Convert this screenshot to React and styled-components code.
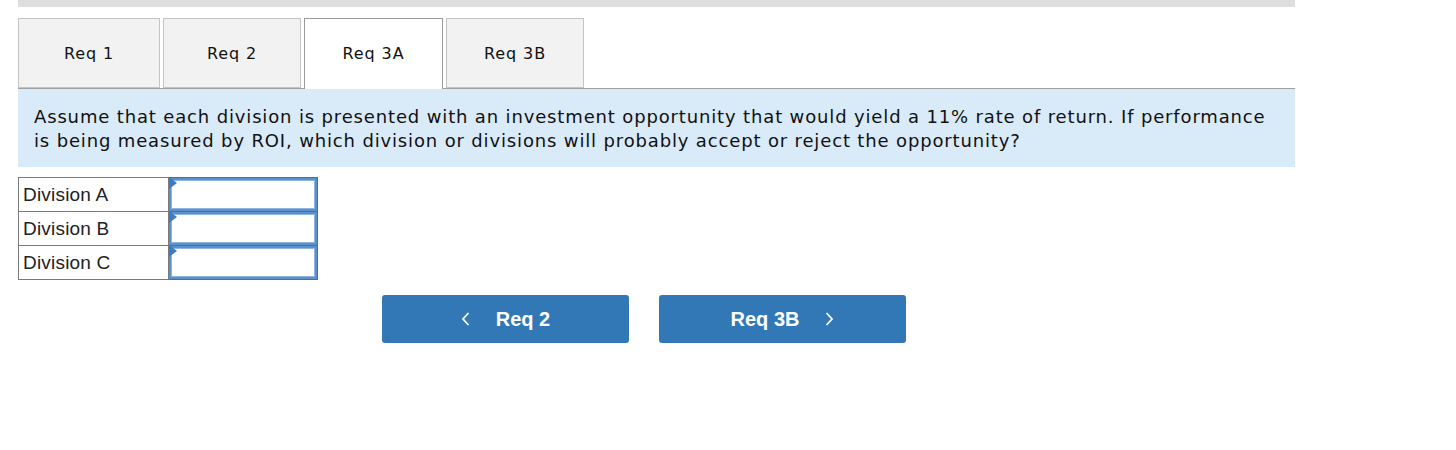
import React from "react";
import styled, { createGlobalStyle } from "styled-components";

const Global = createGlobalStyle`
  html, body { margin: 0; padding: 0; background: #fff; }
  body { font-family: "Liberation Sans", Arial, sans-serif; }
`;

const Page = styled.div`
  width: 1277px;
  margin-left: 18px;
`;

const TopBar = styled.div`
  height: 7px;
  background: #dedede;
`;

const Tabs = styled.div`
  display: flex;
  gap: 3px;
  margin-top: 11px;
  border-bottom: 1px solid #a0a0a0;
  height: 70px;
`;

const Tab = styled.div`
  box-sizing: border-box;
  width: ${(p) => p.$w}px;
  height: ${(p) => (p.$active ? 71 : 70)}px;
  display: flex;
  align-items: center;
  justify-content: center;
  font-family: Verdana, "DejaVu Sans", sans-serif;
  font-size: 16px;
  letter-spacing: 0.9px;
  color: #111;
  background: ${(p) => (p.$active ? "#fff" : "#f2f2f2")};
  border: 1px solid ${(p) => (p.$active ? "#9a9a9a" : "#c4c4c4")};
  border-bottom: ${(p) => (p.$active ? "none" : "1px solid #c4c4c4")};
  padding-bottom: ${(p) => (p.$active ? 1 : 0)}px;
  position: relative;
  z-index: 1;
`;

const Question = styled.div`
  background: #d9eaf8;
  padding: 16px 16px 14px 16px;
  font-family: Verdana, "DejaVu Sans", sans-serif;
  font-size: 18px;
  letter-spacing: 0.85px;
  line-height: 24px;
  color: #111;
`;

const Table = styled.table`
  margin-top: 10px;
  border-collapse: collapse;
  font-family: "Liberation Sans", Arial, sans-serif;
  font-size: 19px;
  letter-spacing: 0.2px;
  color: #222;
`;

const Label = styled.td`
  width: 150px;
  height: 34px;
  box-sizing: border-box;
  border: 1px solid #7a7a7a;
  padding: 0 0 0 4px;
`;

const InputCell = styled.td`
  width: 149px;
  height: 34px;
  box-sizing: border-box;
  border: 1px solid #6a6a6a;
  padding: 0;
  position: relative;
`;

const InputBox = styled.div`
  position: absolute;
  inset: 0;
  border: 2px solid #5b90cd;
  box-shadow: inset 0 0 0 1px #8fb6e3;
`;

const Corner = styled.div`
  position: absolute;
  left: 0;
  top: 0;
  width: 0;
  height: 0;
  border-top: 6px solid transparent;
  border-bottom: 6px solid transparent;
  border-left: 8px solid #3c7cc4;
  transform: translateY(-1px);
`;

const Nav = styled.div`
  display: flex;
  gap: 30px;
  margin-top: 15px;
  padding-left: 364px;
`;

const NavButton = styled.button`
  box-sizing: border-box;
  width: 247px;
  height: 48px;
  border: none;
  border-radius: 3px;
  background: #3278b7;
  color: #fff;
  font-family: "Liberation Sans", Arial, sans-serif;
  font-weight: bold;
  font-size: 20px;
  display: flex;
  align-items: center;
  justify-content: center;
  gap: 25px;
  padding: 0;
`;

const Chevron = ({ dir }) => (
  <svg width="10" height="16" viewBox="0 0 10 16">
    <path
      d={dir === "left" ? "M7.5 2 L2 8 L7.5 14" : "M2.5 2 L8 8 L2.5 14"}
      fill="none"
      stroke="#fff"
      strokeWidth="1.8"
    />
  </svg>
);

const rows = ["Division A", "Division B", "Division C"];

export default function App() {
  return (
    <Page>
      <Global />
      <TopBar />
      <Tabs>
        <Tab $w={142}>Req 1</Tab>
        <Tab $w={138}>Req 2</Tab>
        <Tab $w={139} $active>Req 3A</Tab>
        <Tab $w={138}>Req 3B</Tab>
      </Tabs>
      <Question>
        Assume that each division is presented with an investment opportunity that would yield a 11% rate of return. If performance
        is being measured by ROI, which division or divisions will probably accept or reject the opportunity?
      </Question>
      <Table>
        <tbody>
          {rows.map((r) => (
            <tr key={r}>
              <Label>{r}</Label>
              <InputCell>
                <InputBox />
                <Corner />
              </InputCell>
            </tr>
          ))}
        </tbody>
      </Table>
      <Nav>
        <NavButton>
          <Chevron dir="left" />
          <span>Req 2</span>
        </NavButton>
        <NavButton>
          <span>Req 3B</span>
          <Chevron dir="right" />
        </NavButton>
      </Nav>
    </Page>
  );
}
